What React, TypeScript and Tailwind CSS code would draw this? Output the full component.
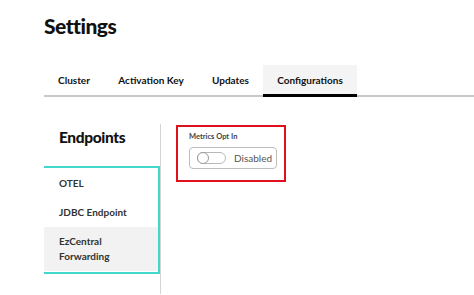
import React, { useState } from 'react';

const tabs = [
  { label: 'Cluster', w: 'w-[60px]' },
  { label: 'Activation Key', w: 'w-[94px]' },
  { label: 'Updates', w: 'w-[65px]' },
  { label: 'Configurations', w: 'w-[94px]' },
];

const endpoints = [
  { id: 'otel', label: 'OTEL' },
  { id: 'jdbc', label: 'JDBC Endpoint' },
  { id: 'ezc', label: 'EzCentral Forwarding' },
];

const App: React.FC = () => {
  const [tab, setTab] = useState('Configurations');
  const [active, setActive] = useState('ezc');
  const [enabled, setEnabled] = useState(false);

  return (
    <div className="w-[474px] h-[295px] overflow-hidden bg-white pl-[44px] font-['Lato','Noto_Sans',sans-serif] text-[#111]">
      <h1 className="pt-[12px] text-[21px] leading-[28px] font-black tracking-tight">Settings</h1>

      <div className="mt-[25px] flex border-b-2 border-[#c8c8c8]">
        {tabs.map(t => (
          <button
            key={t.label}
            onClick={() => setTab(t.label)}
            className={`${t.w} h-[32px] pt-[2px] text-center text-[10px] font-bold -mb-[2px] border-b-[3px] ${
              tab === t.label ? 'bg-[#f4f4f4] border-black' : 'border-transparent'
            }`}
          >
            {t.label}
          </button>
        ))}
      </div>

      <div className="mt-[28px] flex">
        <div className="w-[116px] shrink-0">
          <h2 className="pl-[15px] text-[15.5px] leading-[24px] font-black tracking-tight">Endpoints</h2>
          <div className="mt-[17px] border-t-2 border-r-2 border-b-2 border-[#40d8cc] py-[1px]">
            {endpoints.map(e => (
              <button
                key={e.id}
                onClick={() => setActive(e.id)}
                className={`block w-full text-left pl-[15px] pr-2 py-[7px] text-[10px] leading-[15px] font-bold text-[#333] ${
                  active === e.id ? 'bg-[#f2f2f2]' : ''
                }`}
              >
                {e.id === 'ezc' ? (
                  <>EzCentral<br />Forwarding</>
                ) : (
                  e.label
                )}
              </button>
            ))}
          </div>
        </div>

        <div className="w-px bg-[#d4d4d4] shrink-0 h-[170px] -mt-[1px]" />

        <div className="pl-[15px]">
          <div className="w-[110px] h-[57px] border-2 border-[#e0101c] pl-[11px] pt-[5px]">
            <p className="text-[7.5px] leading-[10px] font-bold text-[#444]">Metrics Opt In</p>
            <button
              onClick={() => setEnabled(v => !v)}
              className="mt-[5px] flex items-center gap-[8px] w-[88px] h-[22px] rounded-[4px] border border-[#bdbdbd] pl-[7px]"
            >
              <span className={`relative w-[29px] h-[12px] rounded-full border border-[#b8b8b8] ${enabled ? 'bg-[#01a982]' : 'bg-white'}`}>
                <span className={`absolute top-[-1px] w-[12px] h-[12px] rounded-full border border-[#999] bg-white ${enabled ? 'right-[-1px]' : 'left-[-1px]'}`} />
              </span>
              <span className="text-[10px] text-[#555]">{enabled ? 'Enabled' : 'Disabled'}</span>
            </button>
          </div>
        </div>
      </div>
    </div>
  );
};

export default App;
